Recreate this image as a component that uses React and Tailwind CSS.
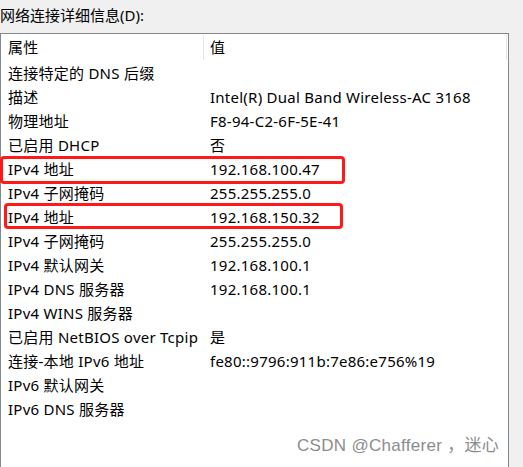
import React from 'react'

const rows = [
  ['连接特定的 DNS 后缀', ''],
  ['描述', 'Intel(R) Dual Band Wireless-AC 3168'],
  ['物理地址', 'F8-94-C2-6F-5E-41'],
  ['已启用 DHCP', '否'],
  ['IPv4 地址', '192.168.100.47'],
  ['IPv4 子网掩码', '255.255.255.0'],
  ['IPv4 地址', '192.168.150.32'],
  ['IPv4 子网掩码', '255.255.255.0'],
  ['IPv4 默认网关', '192.168.100.1'],
  ['IPv4 DNS 服务器', '192.168.100.1'],
  ['IPv4 WINS 服务器', ''],
  ['已启用 NetBIOS over Tcpip', '是'],
  ['连接-本地 IPv6 地址', 'fe80::9796:911b:7e86:e756%19'],
  ['IPv6 默认网关', ''],
  ['IPv6 DNS 服务器', ''],
]

export default function App() {
  return (
    <div
      className="relative w-[523px] h-[467px] overflow-hidden bg-[#f0f0f0] text-black tracking-[0.25px]"
      style={{ fontFamily: '"Noto Sans", "Noto Sans CJK SC", sans-serif' }}
    >
      {/* label */}
      <div className="h-[33px] pt-[4px] text-[15px] leading-[22px] tracking-normal">网络连接详细信息(D):</div>

      {/* list view */}
      <div className="w-[509px] h-[440px] border border-[#828790] bg-white">
        <div className="flex h-[27px] items-center text-[15px]">
          <div className="w-[202px] pl-[7px]">属性</div>
          <div className="w-px h-[25px] bg-[#e5e5e5]" />
          <div className="flex-1 pl-[6px]">值</div>
          <div className="w-px h-[25px] bg-[#e5e5e5] mr-px" />
        </div>
        {rows.map(([k, v], i) => (
          <div key={i} className="flex h-[24px] items-center text-[15px] whitespace-nowrap">
            <div className="w-[203px] pl-[7px]">{k}</div>
            <div className="flex-1 pl-[6px]">{v}</div>
          </div>
        ))}
      </div>

      {/* highlight boxes */}
      <div className="absolute left-0 top-[156px] w-[345px] h-[28px] border-[3px] border-[#ff1a1a] rounded-[4px]" />
      <div className="absolute left-[4px] top-[203px] w-[339px] h-[26px] border-[3px] border-[#ff1a1a] rounded-[4px]" />

      {/* watermark */}
      <div className="absolute left-[297px] top-[434px] w-[211px] overflow-hidden">
        <div
          className="text-[17px] leading-[24px] tracking-[0.3px] text-[#8c8c8c] whitespace-nowrap"
          style={{ fontFamily: '"Liberation Sans", "Noto Sans CJK SC", sans-serif' }}
        >
          CSDN @Chafferer ，迷心
        </div>
      </div>
    </div>
  )
}
